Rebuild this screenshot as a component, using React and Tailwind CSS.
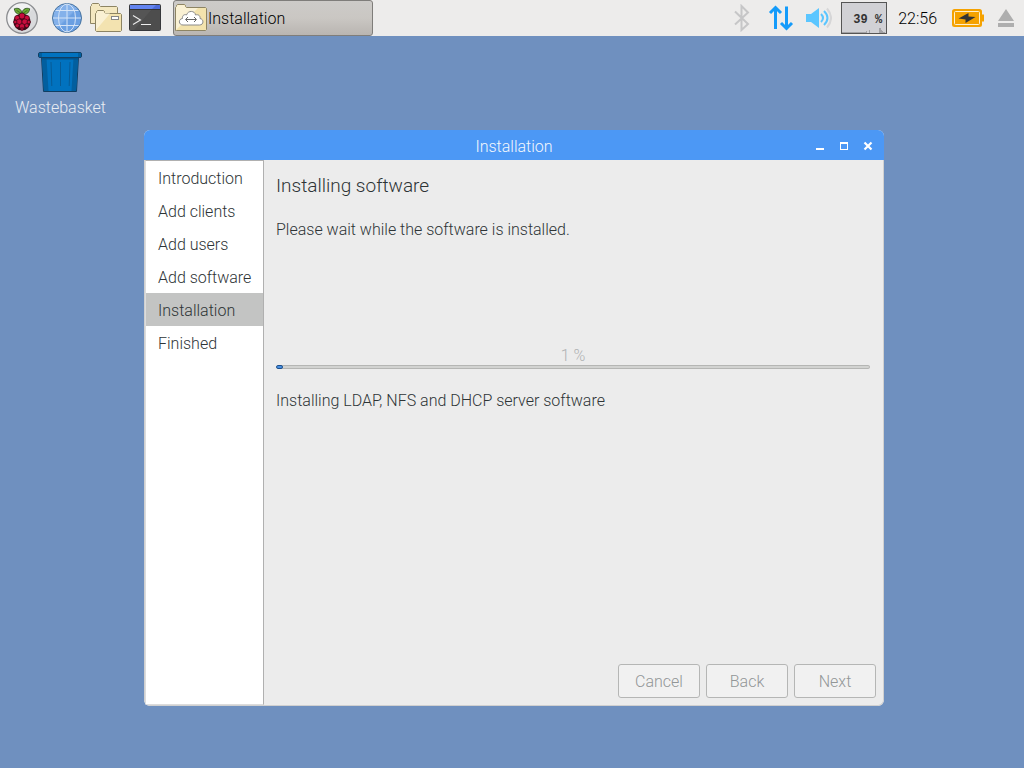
import React from 'react';

function Raspberry() {
  const drupes = [
    [16, 14, 3], [11.2, 16, 2.6], [20.8, 16, 2.6], [13.2, 19.8, 2.9], [18.8, 19.8, 2.9],
    [9.3, 20, 1.7], [22.7, 20, 1.7], [16, 24.2, 2.6], [11.3, 23.6, 2], [20.7, 23.6, 2], [16, 27, 1.3],
  ];
  return (
    <svg viewBox="0 0 32 32" className="size-8" aria-hidden="true">
      <defs>
        <linearGradient id="disc" x1="0" y1="0" x2="1" y2="1">
          <stop offset="0.45" stopColor="#f2f2f3" />
          <stop offset="0.55" stopColor="#d9dadc" />
        </linearGradient>
      </defs>
      <circle cx="16" cy="16" r="15.3" fill="url(#disc)" stroke="#8b8d90" strokeWidth="1.3" />
      <ellipse cx="16" cy="20" rx="8.6" ry="8.6" fill="#3d0716" />
      <path d="M15.6 11.8C13 12.8 9 12 8.3 6.8c3-1.1 6.8-.6 7.7 4.2.9-4.8 4.7-5.3 7.7-4.2-.7 5.2-4.7 6-7.3 5Z" fill="#6cad35" stroke="#24451a" strokeWidth=".8" />
      <path d="m10.5 8.3 4.5 3M21.5 8.3l-4.5 3" stroke="#24451a" strokeWidth=".6" />
      {drupes.map(([x, y, r]) => (
        <circle key={`${x}-${y}`} cx={x} cy={y} r={r} fill="#c90d3d" stroke="#3d0716" strokeWidth=".7" />
      ))}
    </svg>
  );
}

function Globe() {
  return (
    <svg viewBox="0 0 32 32" className="size-8" aria-hidden="true">
      <defs>
        <linearGradient id="sea" x1="0" y1="0" x2="1" y2="1">
          <stop offset="0.48" stopColor="#84b1ea" />
          <stop offset="0.53" stopColor="#6a9fe2" />
        </linearGradient>
      </defs>
      <circle cx="16" cy="16" r="14.5" fill="url(#sea)" stroke="#49749f" />
      <g fill="none" stroke="#d3e3f7" strokeWidth="1">
        <path d="M16 2v28M2 16h28M4.5 8.5h23M4.5 23.5h23" />
        <ellipse cx="16" cy="16" rx="8.5" ry="14" />
      </g>
    </svg>
  );
}

function Folders() {
  return (
    <svg viewBox="0 0 32 32" className="size-8" aria-hidden="true">
      <g stroke="#8d8463" strokeWidth="1">
        <path d="M.5 21.5v-17l1-1v-1l1-1h6l1 1v1l1 1h16l1 1v16Z" fill="#f4e8c0" />
        <path d="M5.5 28.5v-17l1-1v-1l1-1h6l1 1v1l1 1h15l1 1v16l-1 1h-24Z" fill="#f3e3b0" />
      </g>
      <path d="M6 28V12l1-1.5L8 9h5l2 2.5h5Z" fill="#faf1d4" />
      <rect x="21.5" y="14.5" width="7" height="3" fill="#fff" stroke="#868686" />
    </svg>
  );
}

function Terminal() {
  return (
    <svg viewBox="0 0 32 28" className="h-7 w-8" aria-hidden="true">
      <rect x=".5" y=".5" width="31" height="26" rx="1" fill="#555" stroke="#37383c" />
      <path d="M1 1h30v4H1Z" fill="#6384f0" />
      <path d="M27 1h4v4h-8Z" fill="#4c6bda" />
      <path d="M23 5h8v21H5Z" fill="#4d4d4d" />
      <path d="M0 5.5h32" stroke="#333" />
      <path d="m4 11.5 7.5 4.5L4 20.5M12 20.5h10" fill="none" stroke="#eee" strokeWidth="1.1" />
    </svg>
  );
}

function CloudFolder() {
  return (
    <svg viewBox="0 0 32 28" className="h-7 w-8 shrink-0" aria-hidden="true">
      <path d="M.5 26.5v-23l1-1v-1l1-1h7l1 1v1l1 1h19l1 1v21l-1 1h-29Z" fill="#f3e3ad" stroke="#8d8463" />
      <path d="M1 26V3.5L3 1h6l2 3h12Z" fill="#faf1d4" />
      <path d="M8 21c-4.5 0-5-6-.5-6.5C7 11 10 10 11.5 11 13 6 20 6.5 20.5 11c3-1 5 1 4.5 3.5 4 .5 4 6.5-.5 6.5Z" fill="#fff" stroke="#8b8b8b" />
      <path d="M11 15.5h10M13 13l-2.5 2.5L13 18M19 13l2.5 2.5L19 18" fill="none" stroke="#666" />
    </svg>
  );
}

function Tray() {
  return (
    <div className="flex items-center">
      <button aria-label="Bluetooth" className="mr-[18px]">
        <svg viewBox="0 0 16 28" className="h-7 w-4" aria-hidden="true">
          <path d="m1 7.5 13 12.5-6.5 6V2L14 8.5 1 20.5" fill="none" stroke="#c6c6c7" strokeWidth="2" />
        </svg>
      </button>
      <button aria-label="Network" className="mr-3">
        <svg viewBox="0 0 26 28" className="h-7 w-[26px]" aria-hidden="true">
          <path d="M7.5 25V4M2 9l5.5-5.5L13 9M18.5 2.5V24M13 19l5.5 5.5L24 19" fill="none" stroke="#149bfa" strokeWidth="3" />
        </svg>
      </button>
      <button aria-label="Volume" className="mr-[9px]">
        <svg viewBox="0 0 26 22" className="h-[22px] w-[26px]" aria-hidden="true">
          <path d="M0 7h5l8-6v20l-8-6H0Z" fill="#5bc6ff" />
          <path d="M15 7q4 4 0 8M18 4q7 7 0 14" fill="none" stroke="#5bc6ff" strokeWidth="2" />
          <path d="M21 1.5q8 9.5 0 19" fill="none" stroke="#d6d6d7" strokeWidth="2" />
        </svg>
      </button>
      <div className="relative mr-[11px] flex h-8 w-[46px] items-center justify-end border border-[#555] bg-[#d1d1d5] pt-1 pr-1">
        <svg viewBox="0 0 44 6" className="absolute bottom-0 left-0 h-1.5 w-11" aria-hidden="true">
          <path d="M0 6V5h24V4h1v2h2V3h1v3h9V1h2v2h1v1h1v1h2v1Z" fill="#a3a3a6" />
        </svg>
        <span className="relative font-['Liberation_Mono',monospace] text-xs font-bold text-[#333]">39 %</span>
      </div>
      <time className="mr-[15px] pt-0.5 text-black">22:56</time>
      <button aria-label="Battery" className="mr-[13px]">
        <svg viewBox="0 0 32 18" className="h-[18px] w-8" aria-hidden="true">
          <rect width="30" height="18" rx="2.5" fill="#f5a200" />
          <path d="M29 5.5h3v7h-3Z" fill="#f5a200" />
          <rect x="2.5" y="2.5" width="25" height="13" rx="1" fill="none" stroke="#fff0ce" />
          <path d="M6.500 9.500 16.500 4v3.500L23.500 8 13.500 14v-3.500Z" fill="#343434" />
        </svg>
      </button>
      <button aria-label="Eject">
        <svg viewBox="0 0 18 18" className="size-[18px]" aria-hidden="true">
          <path d="M9 0l8 12H1ZM1 14h16v4H1Z" fill="#aeaeae" />
        </svg>
      </button>
    </div>
  );
}

function Taskbar() {
  return (
    <header className="flex h-9 items-center justify-between bg-[#edeceb] pr-[9px] pl-1.5">
      <nav aria-label="Panel" className="flex h-full items-center">
        <button aria-label="Menu" className="mr-[13px]"><Raspberry /></button>
        <button aria-label="Web Browser" className="mr-[7px]"><Globe /></button>
        <button aria-label="File Manager" className="mr-[7px]"><Folders /></button>
        <button aria-label="Terminal" className="mr-3"><Terminal /></button>
        <button className="flex h-9 w-[200px] items-center gap-px rounded-[3px] border border-[#7f7d7a] bg-linear-to-b from-[#cdcbc8] via-[#cac7c3] to-[#b9b5b1] pl-px text-black">
          <CloudFolder />
          <span className="pt-0.5">Installation</span>
        </button>
      </nav>
      <Tray />
    </header>
  );
}

function Wastebasket() {
  return (
    <button className="flex flex-col items-center gap-1 text-[#e9edf3]">
      <svg viewBox="0 0 44 40" className="h-10 w-11" aria-hidden="true">
        <path d="M3.5 5h37l-2 34.5h-33Z" fill="#0172bf" stroke="#123f62" />
        <path d="M4 6h4.5l2 33H6ZM40 6h-4.5l-2 33H38Z" fill="#025f9f" />
        <path d="M4 6h36v1.5H4Z" fill="#01538c" />
        <path d="m13 10 .8 24M22.5 10v24M32 10l-.8 24" stroke="#075b96" fill="none" />
        <rect x=".5" y=".5" width="43" height="5" rx="1.5" fill="#0172bf" stroke="#123f62" />
        <path d="M1 1h3v4H1ZM40 1h3v4h-3Z" fill="#025f9f" />
      </svg>
      Wastebasket
    </button>
  );
}

const steps = ['Introduction', 'Add clients', 'Add users', 'Add software', 'Installation', 'Finished'];

function InstallerWindow() {
  return (
    <section aria-label="Installation" className="absolute top-[94px] left-36 flex min-h-[576px] w-[740px] flex-col overflow-hidden rounded-md bg-[#ececec]">
      <div className="grid h-[30px] grid-cols-[1fr_auto_1fr] items-center bg-[#4c98f5] px-2.5 text-[#f3f7fc]">
        <h1 className="col-start-2 pt-1">Installation</h1>
        <div className="flex items-center justify-end gap-3 pt-0.5">
          <button aria-label="Minimize" className="size-3">
            <svg viewBox="0 0 12 12" aria-hidden="true"><path d="M2 8h8v2H2Z" fill="#fff" /></svg>
          </button>
          <button aria-label="Maximize" className="size-3">
            <svg viewBox="0 0 12 12" aria-hidden="true"><path d="M2 2h8v8H2ZM3 4v5h6V4Z" fill="#fff" fillRule="evenodd" /></svg>
          </button>
          <button aria-label="Close" className="size-3">
            <svg viewBox="0 0 12 12" aria-hidden="true"><path d="m2.5 2.5 7 7M9.5 2.5l-7 7" stroke="#fff" strokeWidth="2.2" /></svg>
          </button>
        </div>
      </div>
      <div className="flex grow rounded-b-md border border-t-0 border-[#d0d0d0]">
        <ol className="w-[119px] shrink-0 border border-t-[#b0b0b0] border-r-[#b0b0b0] border-b-[#dcdcdc] border-l-[#dcdcdc] bg-white">
          {steps.map((step) => (
            <li
              key={step}
              aria-current={step === 'Installation' ? 'step' : undefined}
              className={step === 'Installation' ? 'bg-[#c3c4c3] pt-0.5 pl-3 leading-[31px]' : 'pt-0.5 pl-3 leading-[31px]'}
            >
              {step}
            </li>
          ))}
        </ol>
        <div className="flex grow flex-col pt-3 pr-[7px] pb-[7px] pl-3">
          <h2 className="text-[19px] leading-7">Installing software</h2>
          <p className="mt-[18px] leading-6">Please wait while the software is installed.</p>
          <div className="mt-[105px] mr-1.5 flex flex-col">
            <label htmlFor="progress" className="self-center leading-[18px] text-[#b0b2b3]">1 %</label>
            <progress
              id="progress"
              value="1"
              max="100"
              className="h-1 w-full appearance-none overflow-hidden rounded-xs bg-[#d2d3d1] [&::-webkit-progress-bar]:rounded-xs [&::-webkit-progress-bar]:bg-[#d2d3d1] [&::-webkit-progress-bar]:inset-ring [&::-webkit-progress-bar]:inset-ring-[#b5b6b4] [&::-webkit-progress-value]:box-border [&::-webkit-progress-value]:min-w-[7px] [&::-webkit-progress-value]:rounded-xs [&::-webkit-progress-value]:border [&::-webkit-progress-value]:border-[#1c4f8c] [&::-webkit-progress-value]:bg-[#4a90e2]"
            />
          </div>
          <p className="mt-5 leading-6">Installing LDAP, NFS and DHCP server software</p>
          <div className="mt-auto flex justify-end gap-1.5">
            {['Cancel', 'Back', 'Next'].map((label) => (
              <button key={label} disabled className="h-[34px] w-[82px] rounded-[3px] border border-[#b5b6b5] bg-[#f1f1f1] pt-0.5 text-[#929697]">
                {label}
              </button>
            ))}
          </div>
        </div>
      </div>
    </section>
  );
}

export default function App() {
  return (
    <div className="flex min-h-screen flex-col bg-[#6f90bf] font-[Roboto,sans-serif] text-base font-light text-[#2e3436]">
      <Taskbar />
      <main className="relative flex grow items-start pt-4 pl-[15px]">
        <Wastebasket />
        <InstallerWindow />
      </main>
    </div>
  );
}
